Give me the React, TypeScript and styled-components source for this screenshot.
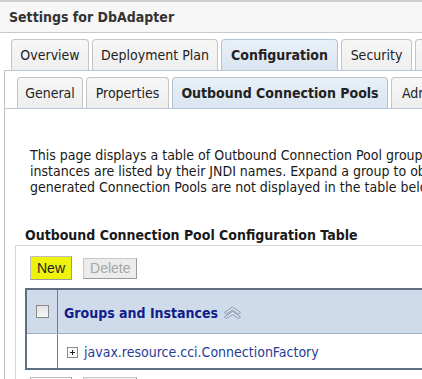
import React from "react";
import styled, { createGlobalStyle } from "styled-components";

const GlobalStyle = createGlobalStyle`
  html, body {
    margin: 0;
    padding: 0;
    background: #ffffff;
    overflow: hidden;
  }
  body {
    font-family: "DejaVu Sans Condensed", "DejaVu Sans", sans-serif;
    font-stretch: condensed;
    color: #1a1a1a;
  }
`;

const Page = styled.div`
  width: 422px;
  height: 379px;
  overflow: hidden;
  position: relative;
`;

const TitleBar = styled.div`
  height: 30px;
  border-top: 2px solid #cfcfcf;
  border-bottom: 1px solid #c9c9c9;
  background: #f7f7f7;
  display: flex;
  align-items: center;
  padding-left: 9px;
  font-weight: bold;
  font-size: 14px;
  color: #333;
  white-space: nowrap;
`;

const TabRow = styled.div<{ $top: number; $left: number }>`
  display: flex;
  gap: 3px;
  margin-top: ${(p) => p.$top}px;
  padding-left: ${(p) => p.$left}px;
  white-space: nowrap;
  align-items: flex-end;
`;

const Tab = styled.div<{ $active?: boolean; $width: number }>`
  flex: none;
  width: ${(p) => p.$width}px;
  height: 31px;
  box-sizing: border-box;
  display: flex;
  align-items: center;
  justify-content: center;
  border: 1px solid ${(p) => (p.$active ? "#b3c4d6" : "#c4c4c4")};
  border-bottom: none;
  border-radius: 4px 4px 0 0;
  background: ${(p) =>
    p.$active
      ? "linear-gradient(#e9f0f7, #d9e5f1)"
      : "linear-gradient(#f7f7f7, #eeeeee)"};
  font-size: 14px;
  font-weight: ${(p) => (p.$active ? "bold" : "normal")};
  color: #222;
  overflow: hidden;
`;

const EdgeTab = styled(Tab)`
  justify-content: flex-start;
  padding-left: 10px;
`;

const Panel = styled.div`
  border-top: 1px solid #b9c7d5;
  border-left: 1px solid #c3c3c3;
  margin-left: 4px;
`;

const InnerPanel = styled.div`
  border-top: 1px solid #b9c7d5;
  margin-left: -1px;
  padding-left: 26px;
  padding-top: 38px;
`;

const Intro = styled.p`
  margin: 0;
  font-size: 14px;
  line-height: 16px;
  white-space: nowrap;
  color: #1a1a1a;
`;

const SectionTitle = styled.h2`
  margin: 32px 0 0 -5px;
  font-size: 14px;
  line-height: 17px;
  font-weight: bold;
  color: #1a1a1a;
  white-space: nowrap;
`;

const TableBox = styled.div`
  margin: 1px 0 0 -15px;
  border: 1px solid #d6d6d6;
  border-right: none;
  padding: 10px 0 0 9px;
`;

const Toolbar = styled.div`
  display: flex;
  align-items: center;
  gap: 11px;
  padding-left: 5px;
  height: 24px;
`;

type Variant = "new" | "plain" | "disabled";

const Button = styled.div<{ $variant: Variant }>`
  box-sizing: border-box;
  height: ${(p) => (p.$variant === "disabled" ? 21 : 24)}px;
  padding: 0 6px;
  display: flex;
  align-items: center;
  font-family: "Liberation Sans", Arial, sans-serif;
  font-size: 14px;
  border: 1px solid ${(p) => (p.$variant === "disabled" ? "#c9c9c9" : "#bdbdbd")};
  border-right-color: #9a9a9a;
  border-bottom-color: #9a9a9a;
  background: ${(p) =>
    p.$variant === "new" ? "#eef20c" : p.$variant === "plain" ? "#f8f8f8" : "#ececec"};
  color: ${(p) => (p.$variant === "disabled" ? "#a6a6a6" : "#222")};
`;

const Table = styled.div`
  margin-top: 8px;
  border: 2px solid #5f6f82;
  border-right: none;
`;

const Row = styled.div<{ $header?: boolean }>`
  display: flex;
  height: ${(p) => (p.$header ? 43 : 34)}px;
  background: ${(p) => (p.$header ? "#cfdbeb" : "#ffffff")};
  border-bottom: ${(p) => (p.$header ? "1px solid #9fb0c4" : "none")};
`;

const CheckCell = styled.div`
  flex: none;
  width: 30px;
  border-right: 1px solid #6c7c8e;
  display: flex;
  align-items: center;
  justify-content: center;
`;

const CheckBox = styled.div`
  width: 11px;
  height: 11px;
  border: 1px solid #8a8a8a;
  background: linear-gradient(#e2e2e2, #f7f7f7);
`;

const MainCell = styled.div`
  flex: 1;
  display: flex;
  align-items: center;
  padding-left: 6px;
  padding-top: 2px;
  white-space: nowrap;
`;

const HeaderText = styled.span`
  font-size: 14px;
  font-weight: bold;
  color: #0f1e88;
`;

const LinkText = styled.span`
  font-size: 14px;
  color: #1f3c96;
  margin-left: 6px;
`;

const Expander = styled.span`
  box-sizing: border-box;
  width: 11px;
  height: 11px;
  margin-left: 3px;
  border: 1px solid #8a8a8a;
  background: #fafafa;
  position: relative;
  &::before,
  &::after {
    content: "";
    position: absolute;
    background: #222;
  }
  &::before {
    left: 2px;
    top: 4px;
    width: 5px;
    height: 1px;
  }
  &::after {
    left: 4px;
    top: 2px;
    width: 1px;
    height: 5px;
  }
`;

const SortIcon = () => (
  <svg width="19" height="13" viewBox="0 0 19 13" style={{ marginLeft: 5 }}>
    <path
      d="M1.5 6.5 L9.5 1 L17.5 6.5 L15.5 8 L9.5 4 L3.5 8 Z"
      fill="#dfe6ef"
      stroke="#8496ae"
      strokeWidth="1"
      strokeLinejoin="round"
    />
    <path
      d="M1.5 11 L9.5 5.5 L17.5 11 L15.5 12.5 L9.5 8.5 L3.5 12.5 Z"
      fill="#dfe6ef"
      stroke="#8496ae"
      strokeWidth="1"
      strokeLinejoin="round"
    />
  </svg>
);

const BottomToolbar = styled(Toolbar)`
  margin-top: 7px;
  align-items: flex-start;
`;

export default function App() {
  return (
    <Page>
      <GlobalStyle />
      <TitleBar>Settings for DbAdapter</TitleBar>
      <TabRow $top={6} $left={11}>
        <Tab $width={78}>Overview</Tab>
        <Tab $width={126}>Deployment Plan</Tab>
        <Tab $width={117} $active>
          Configuration
        </Tab>
        <Tab $width={71}>Security</Tab>
        <EdgeTab $width={60} />
      </TabRow>
      <Panel>
        <TabRow $top={6} $left={12}>
          <Tab $width={66}>General</Tab>
          <Tab $width={83}>Properties</Tab>
          <Tab $width={216} $active>
            Outbound Connection Pools
          </Tab>
          <EdgeTab $width={70}>Admin</EdgeTab>
        </TabRow>
        <InnerPanel>
          <Intro>
            This page displays a table of Outbound Connection Pool groups and
            <br />
            instances are listed by their JNDI names. Expand a group to obtain
            <br />
            generated Connection Pools are not displayed in the table below.
          </Intro>
          <SectionTitle>Outbound Connection Pool Configuration Table</SectionTitle>
          <TableBox>
            <Toolbar>
              <Button $variant="new">New</Button>
              <Button $variant="disabled">Delete</Button>
            </Toolbar>
            <Table>
              <Row $header>
                <CheckCell>
                  <CheckBox />
                </CheckCell>
                <MainCell>
                  <HeaderText>Groups and Instances</HeaderText>
                  <SortIcon />
                </MainCell>
              </Row>
              <Row>
                <CheckCell />
                <MainCell>
                  <Expander />
                  <LinkText>javax.resource.cci.ConnectionFactory</LinkText>
                </MainCell>
              </Row>
            </Table>
            <BottomToolbar>
              <Button $variant="plain">New</Button>
              <Button $variant="disabled">Delete</Button>
            </BottomToolbar>
          </TableBox>
        </InnerPanel>
      </Panel>
    </Page>
  );
}
